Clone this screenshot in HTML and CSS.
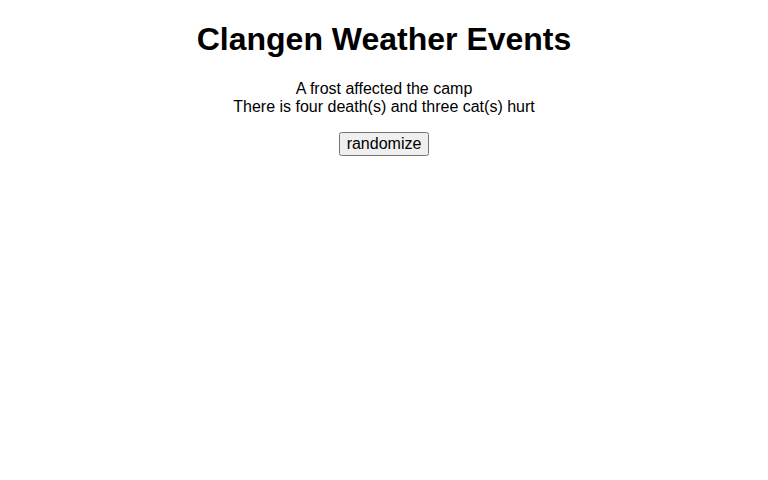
FILE: index.html
```html
<!DOCTYPE html>
<html lang="en">
<head>
    <meta charset="UTF-8">
    <meta name="viewport" content="width=device-width, initial-scale=1.0">
    <title>Clangen Weather Events</title>
    <link rel="stylesheet" href="styles.css">
</head>
<body>
    <div class="container">
        <h1>Clangen Weather Events</h1>
        <p class="event" id="event">
            A frost affected the camp<br>
            There is four death(s) and three cat(s) hurt
        </p>
        <button class="randomize-btn" id="randomizeButton">randomize</button>
    </div>
</body>
</html>
```

FILE: styles.css
```css
body {
    font-family: 'Liberation Sans', Arial, sans-serif;
    font-size: 16px;
    margin: 0 8px;
    background: white;
    color: black;
}

.container {
    text-align: center;
}

h1 {
    font-size: 32px;
    font-weight: bold;
    margin: 21.44px 0;
}

.event {
    margin: 16px 0;
}

.randomize-btn {
    font-family: 'Liberation Sans', Arial, sans-serif;
    font-size: 16px;
}
```
